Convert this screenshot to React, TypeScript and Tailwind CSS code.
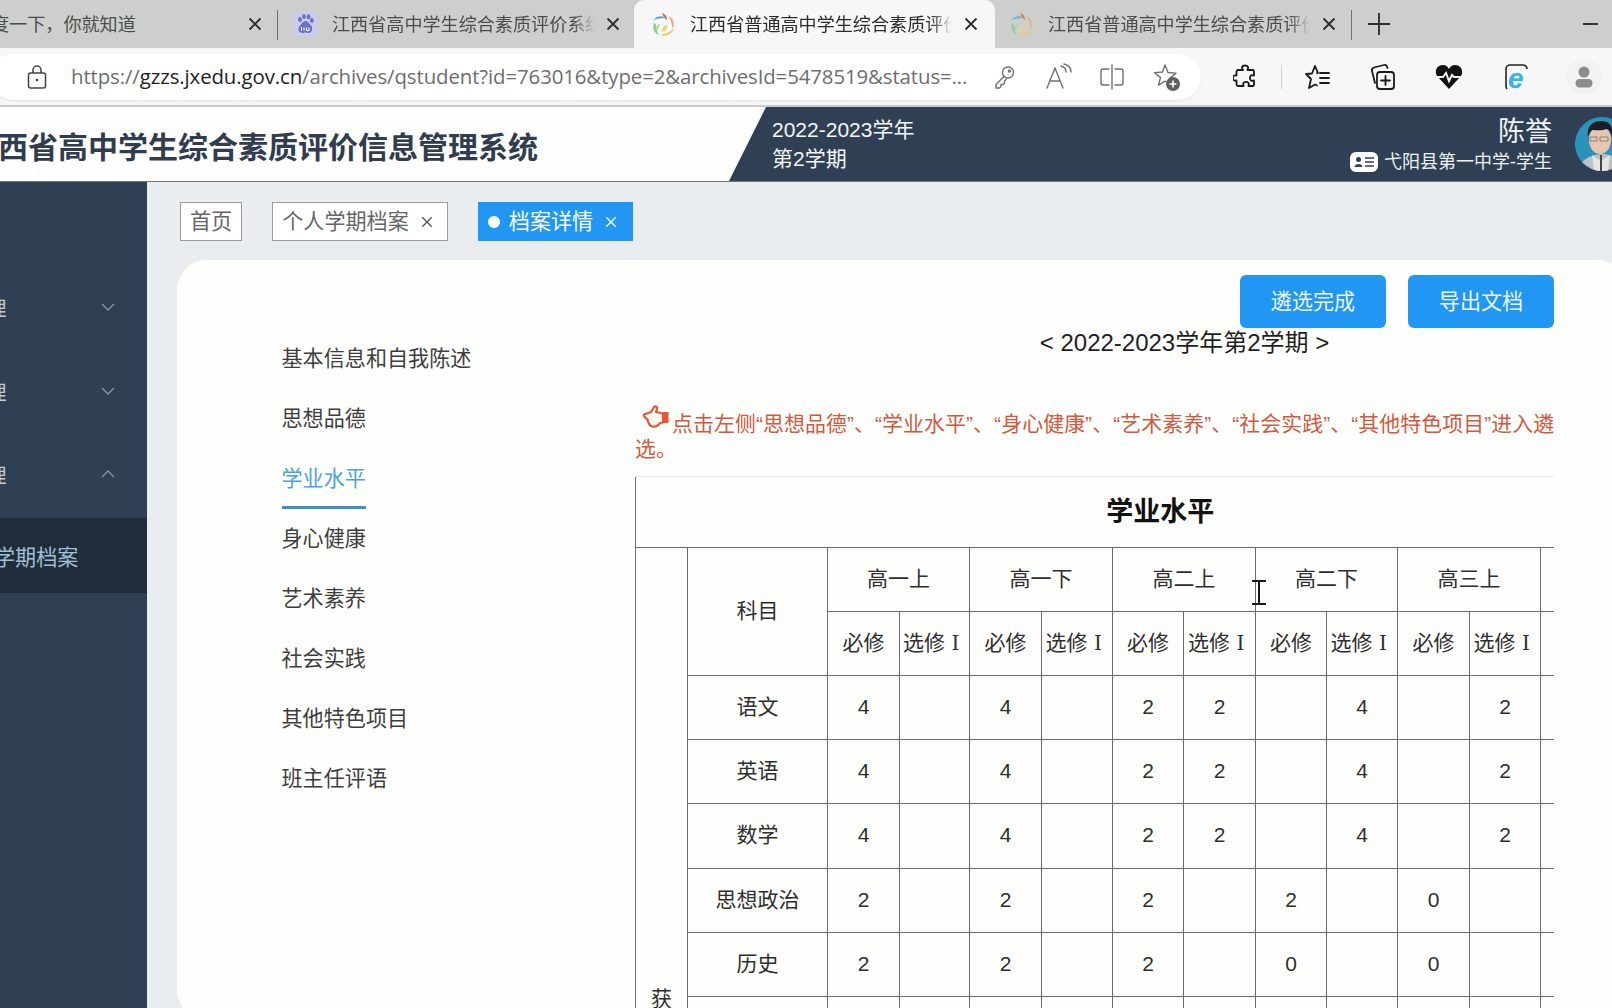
import React from "react";

const FONT = "font-['Liberation_Sans','Noto_Sans_CJK_SC',sans-serif]";

function Pinwheel({ faded = false }: { faded?: boolean }) {
  const o = faded ? 0.75 : 1;
  return (
    <svg width="27" height="27" viewBox="0 0 27 27" fill="none" opacity={o}>
      <path d="M12 2c3 1 5 3 5 7-2-1-4-4-5-7z" fill="#e2603c" />
      <path d="M19 5c4 2 6 7 4 12-1 0-1-1-1-2 0-4-2-6-3-10z" fill="#f0a58c" />
      <path d="M24 18c-2 5-8 8-13 6 0-1 1-1 2-1 4 0 7-3 11-5z" fill="#f1c85c" />
      <path d="M17 14c1 3-1 6-5 7-1-3 1-6 5-7z" fill="#f4d27a" />
      <path d="M9 24C4 22 2 17 4 12c3 1 2 4 3 7 0 2 1 3 2 5z" fill="#7fd09a" />
      <path d="M10 13c-1 2-2 5-3 6-1-3 0-5 3-6z" fill="#9ad67e" />
      <path d="M3 10c2-4 7-6 12-4-2 2-5 1-8 2-2 0-3 1-4 2z" fill="#36b4dc" />
    </svg>
  );
}

function BaiduIcon() {
  return (
    <svg width="24" height="24" viewBox="0 0 24 24">
      <rect width="24" height="24" rx="4" fill="#c9cbef" />
      <ellipse cx="7" cy="7.5" rx="2" ry="2.6" fill="#6d6fc9" />
      <ellipse cx="11" cy="4.6" rx="1.9" ry="2.5" fill="#6d6fc9" />
      <ellipse cx="15.5" cy="4.8" rx="1.9" ry="2.5" fill="#6d6fc9" />
      <ellipse cx="18.8" cy="8.5" rx="1.9" ry="2.4" fill="#6d6fc9" />
      <path d="M12.5 9c2.5 0 3.5 2.6 5.5 4.5 2.3 2.4 1.3 7.5-2.5 7.5-1.500 0-2-.5-3-.5s-1.500.5-3 .5c-4 0-5-4.500-2.800-7C8.500 12 10 9 12.500 9z" fill="#6d6fc9" />
      <path d="M8.500 15v4M11 15.500v3M13.500 15.500v2.500c0 1 2.500 1 2.500 0v-2.500" stroke="#fff" strokeWidth="1.100" fill="none" />
    </svg>
  );
}

function Close({ size = 14, color = "#2b2b2b", width = 1.8 }: { size?: number; color?: string; width?: number }) {
  return (
    <svg width={size} height={size} viewBox="0 0 14 14" fill="none" stroke={color} strokeWidth={width}>
      <path d="M1.500 1.500l11 11M12.500 1.500l-11 11" />
    </svg>
  );
}

function Tab({
  children,
  icon,
  active,
  w,
  divider,
}: {
  children: React.ReactNode;
  icon?: React.ReactNode;
  active?: boolean;
  w: string;
  divider?: boolean;
}) {
  return (
    <div
      className={`relative flex h-full shrink-0 items-center ${w} ${
        active ? "rounded-t-[10px] bg-[#f7f7f7] text-[#2b2b2b]" : "text-[#4a4d4c]"
      }`}
    >
      {icon}
      {children}
      {divider && <span className="absolute right-0 top-[10px] h-[30px] w-px bg-[#6e706e]" />}
    </div>
  );
}

function FadeText({ text, w }: { text: string; w: string }) {
  return (
    <span
      className={`block overflow-hidden whitespace-nowrap pt-[1px] text-[18.1px] leading-[26px] ${w} [mask-image:linear-gradient(to_right,black_92%,transparent)]`}
    >
      {text}
    </span>
  );
}

function TabBar() {
  return (
    <div className="flex h-[48px] items-center bg-[#cdcfcc]">
      <Tab w="w-[278px]" divider>
        <span className="-ml-[9px] w-[257px] whitespace-nowrap pt-[1px] text-[18.1px] leading-[26px]">度一下，你就知道</span>
        <Close />
      </Tab>
      <Tab
        w="w-[356px] pl-[15px]"
        icon={
          <span className="mr-[15px] block h-[24px] w-[24px]">
            <BaiduIcon />
          </span>
        }
      >
        <FadeText text="江西省高中学生综合素质评价系统" w="w-[263px]" />
        <span className="ml-[11px]">
          <Close />
        </span>
      </Tab>
      <Tab
        active
        w="w-[361px] pl-[16px]"
        icon={
          <span className="mr-[13px] block h-[27px] w-[27px]">
            <Pinwheel />
          </span>
        }
      >
        <FadeText text="江西省普通高中学生综合素质评价系统" w="w-[262px]" />
        <span className="ml-[12px]">
          <Close />
        </span>
      </Tab>
      <Tab
        w="w-[357px] pl-[13px]"
        divider
        icon={
          <span className="mr-[13px] block h-[27px] w-[27px]">
            <Pinwheel faded />
          </span>
        }
      >
        <FadeText text="江西省普通高中学生综合素质评价系统" w="w-[262px]" />
        <span className="ml-[12px]">
          <Close />
        </span>
      </Tab>
      <span className="ml-[16px]">
        <svg width="22" height="22" viewBox="0 0 22 22" stroke="#2b2b2b" strokeWidth="1.800">
          <path d="M11 0v22M0 11h22" />
        </svg>
      </span>
      <span className="ml-[193px] block h-[2px] w-[15px] bg-[#333]" />
    </div>
  );
}

const stroke = { fill: "none", stroke: "#707070", strokeWidth: 1.4, strokeLinecap: "round", strokeLinejoin: "round" } as const;
const dark = { fill: "none", stroke: "#1a1a1a", strokeWidth: 1.8, strokeLinecap: "round", strokeLinejoin: "round" } as const;

function Toolbar() {
  return (
    <div className="flex h-[57px] items-center border-b-0 bg-[#f7f7f7]">
      <div className="-ml-[10px] flex h-[46px] w-[1211px] shrink-0 items-center rounded-full bg-white shadow-[0_1px_2px_rgba(0,0,0,0.08)]">
        <span className="ml-[37px] block h-[24px] w-[20px]">
          <svg width="20" height="24" viewBox="0 0 20 24" fill="none" stroke="#444" strokeWidth="1.500">
            <rect x="1.500" y="8" width="17" height="15" rx="2" />
            <path d="M6 8V5a4 4 0 0 1 8 0v3" />
            <circle cx="10" cy="15" r="1.300" fill="#444" stroke="none" />
          </svg>
        </span>
        <span className="mb-[2px] ml-[24px] w-[897px] whitespace-nowrap text-[20.4px] leading-[28px] tracking-[-0.1px] text-[#6d6d6d] font-['Open_Sans','Liberation_Sans',sans-serif]">
          https://<span className="text-[#222]">gzzs.jxedu.gov.cn</span>/archives/qstudent?id=763016&amp;type=2&amp;archivesId=5478519&amp;status=...
        </span>
        <span className="ml-[23px] block h-[26px] w-[26px]">
          <svg width="26" height="26" viewBox="0 0 26 26" {...stroke}>
            <circle cx="17" cy="8.500" r="5.500" />
            <circle cx="18.500" cy="7" r="1" />
            <path d="M13 12.500L5 20.500v3.500h3.500l1.500-1.500v-2h2l1.500-1.500v-2l2-2" />
          </svg>
        </span>
        <span className="ml-[28px] block h-[28px] w-[28px]">
          <svg width="28" height="28" viewBox="0 0 28 28" {...stroke}>
            <path d="M2 25L10 5l8 20M5 18h10" />
            <path d="M16 3c3 1 5 3 5 6M19 1c4 1 7 4 7 8" />
          </svg>
        </span>
        <span className="ml-[26px] block h-[28px] w-[26px]">
          <svg width="26" height="28" viewBox="0 0 26 28" {...stroke}>
            <path d="M10 6H4a2 2 0 0 0-2 2v12a2 2 0 0 0 2 2h6M16 6h6a2 2 0 0 1 2 2v12a2 2 0 0 1-2 2h-6M13 2v24" />
          </svg>
        </span>
        <span className="ml-[28px] block h-[30px] w-[28px]">
          <svg width="28" height="30" viewBox="0 0 28 30">
            <path d="M12 3l3 7.500 8 .6-6 5 2 6.500-7-3.500-6.500 4 2-7.500-6-5 8-.6z" {...stroke} />
            <circle cx="20" cy="22" r="7" fill="#5f5f5f" />
            <path d="M20 18.500v7M16.500 22h7" stroke="#fff" strokeWidth="1.600" />
          </svg>
        </span>
      </div>
      <span className="ml-[32px] block h-[26px] w-[24px]">
        <svg width="24" height="26" viewBox="0 0 24 26" {...dark}>
          <path d="M9 3c1-2 5-2 6 0 .5 1-.5 2-.5 3h5c1 0 1.500 1 1.500 2v3.500c-1 0-2-.8-3 0-1.500 1.200-1.500 3.800 0 5 1 .8 2 0 3 0V20c0 1-.5 2-1.500 2h-4c0-1 .8-2 0-3-1.200-1.500-3.800-1.500-5 0-.8 1 0 2 0 3H5c-1 0-1.500-1-1.500-2v-3.500c-1 0-2 .8-3-.5-.8-1.500-.8-3 0-4 1-1.200 2-.5 3-.5V8c0-1 .5-2 1.500-2h5c0-1-1.500-2-1-3z" />
        </svg>
      </span>
      <span className="ml-[24px] block h-[24px] w-px bg-[#cfcfcf]" />
      <span className="ml-[23px] block h-[26px] w-[26px]">
        <svg width="26" height="26" viewBox="0 0 26 26" {...dark}>
          <path d="M10 2l3 7h-1M10 2L7 9.500l-6 .5 5 5-2 9 6-3.500 2 1" />
          <path d="M15 9h9M15 14h9M15 19h9" />
        </svg>
      </span>
      <span className="ml-[39px] block h-[28px] w-[26px]">
        <svg width="26" height="28" viewBox="0 0 26 28" {...dark}>
          <path d="M5 20L2 8c-.5-2 .5-3 2-3.500L14 2c2-.5 3 1 3.500 3" />
          <rect x="7" y="9" width="17" height="17" rx="3" />
          <path d="M15.500 13v9M11 17.500h9" />
        </svg>
      </span>
      <span className="ml-[39px] block h-[26px] w-[28px]">
        <svg width="28" height="26" viewBox="0 0 28 26">
          <path d="M14 25L2 12C-1 7 2 1 8 1c3 0 5 2 6 4 1-2 3-4 6-4 6 0 9 6 6 11z" fill="#111" />
          <path d="M0 13h8l3-4 3 8 3-6 2 2h9" fill="none" stroke="#f7f7f7" strokeWidth="2" />
        </svg>
      </span>
      <span className="ml-[42px] block h-[26px] w-[24px]">
        <svg width="24" height="26" viewBox="0 0 24 26">
          <path d="M2 25c-1-1-1-2-1-3V5a4 4 0 0 1 4-4h13a4 4 0 0 1 4 4" fill="none" stroke="#222" strokeWidth="1.600" />
          <text x="3" y="24" fontSize="28" fontWeight="700" fontStyle="italic" fill="#32b5e5" fontFamily="'Liberation Sans',sans-serif">e</text>
        </svg>
      </span>
      <span className="ml-[37px] flex h-[36px] w-[36px] items-center justify-center rounded-full bg-[#f2f2f2]">
        <svg width="18" height="24" viewBox="0 0 18 24" fill="#8c8c8c">
          <circle cx="9" cy="7" r="5.500" />
          <rect x="0.500" y="14" width="17" height="8.500" rx="4.200" />
        </svg>
      </span>
    </div>
  );
}

function Header() {
  return (
    <div className="flex h-[77px] justify-between border-t-[2px] border-b border-t-[#c9cccc] border-b-[#6f7680] bg-[#2f4054]">
      <div className="flex w-[766px] shrink-0 items-center bg-[#fefefe] pt-[8px] [clip-path:polygon(0_0,100%_0,729px_100%,0_100%)]">
        <h1 className="-ml-[2px] whitespace-nowrap text-[30px] font-bold leading-[40px] text-[#2f3d4e]">
          西省高中学生综合素质评价信息管理系统
        </h1>
      </div>
      <div className="ml-[6px] flex flex-col justify-center text-[21px] leading-[29px] text-[#f5f7f8]">
        <span className="whitespace-nowrap">2022-2023学年</span>
        <span>第2学期</span>
      </div>
      <div className="ml-auto flex items-center">
        <div className="flex flex-col items-end pt-[2px]">
          <span className="text-[27px] leading-[33px] text-[#eef2f4]">陈誉</span>
          <div className="flex items-center gap-[6px] text-[18px] leading-[26px] text-[#eef2f4]">
            <svg width="28" height="20" viewBox="0 0 28 20">
              <rect width="28" height="20" rx="6" fill="#fff" />
              <circle cx="8.500" cy="7.500" r="2.500" fill="#2f4054" />
              <path d="M4.500 15c0-4 8-4 8 0z" fill="#2f4054" />
              <path d="M15 6h9M15 10h9M15 14h9" stroke="#2f4054" strokeWidth="1.500" />
            </svg>
            <span className="whitespace-nowrap">弋阳县第一中学-学生</span>
          </div>
        </div>
        <span className="ml-[23px] -mr-[17px] block h-[54px] w-[54px] shrink-0">
          <svg width="54" height="54" viewBox="0 0 54 54">
            <defs>
              <clipPath id="av">
                <circle cx="27" cy="27" r="27" />
              </clipPath>
            </defs>
            <g clipPath="url(#av)">
              <rect width="54" height="54" fill="#2a93b9" />
              <path d="M4 54c1-12 12-16 22-17 12 0 22 5 24 17z" fill="#bfc1c2" />
              <path d="M17 38l9 6 9-6-2 16H19z" fill="#e4e6e6" />
              <rect x="25" y="38" width="2" height="16" fill="#444" />
              <ellipse cx="25" cy="23" rx="11" ry="14" fill="#e6c6b0" />
              <path d="M13 20C11 9 18 4 26 4c8 0 13 5 11 16-1-4-2-7-5-8-5 2-12 1-15 1-2 2-3 4-4 7z" fill="#1b1f24" />
              <path d="M15 20h7v4h-7zM25 20h8v4h-8z" fill="none" stroke="#555" strokeWidth="0.600" />
            </g>
          </svg>
        </span>
      </div>
    </div>
  );
}

function Sidebar() {
  const Chevron = ({ up }: { up?: boolean }) => (
    <svg className="mb-[5px]" width="14" height="8" viewBox="0 0 14 8" fill="none" stroke="#8a98a6" strokeWidth="1.300">
      <path d={up ? "M1 7l6-6 6 6" : "M1 1l6 6 6-6"} />
    </svg>
  );
  const Item = ({ up, h }: { up?: boolean; h: string }) => (
    <div className={`flex items-center justify-between pr-[32px] text-[20.6px] text-[#c3ccd4] ${h}`}>
      <span className="-ml-[14px]">理</span>
      <Chevron up={up} />
    </div>
  );
  return (
    <aside className="flex w-[147px] shrink-0 flex-col bg-[#2f4054] pt-[85px]">
      <Item h="h-[84px]" />
      <Item h="h-[84px]" />
      <Item h="h-[83px]" up />
      <div className="flex h-[75px] items-center overflow-hidden bg-[#1f2c3a] pt-[5px] text-[21.1px] text-[#9fc0d6]">
        <span className="-ml-[6px] whitespace-nowrap">学期档案</span>
      </div>
    </aside>
  );
}

function Tag({ children, active, close }: { children: React.ReactNode; active?: boolean; close?: boolean }) {
  return (
    <div
      className={`flex h-[39px] items-center whitespace-nowrap border pl-[9px] text-[21.1px] ${close ? (active ? "pr-[15px]" : "pr-[14px]") : "pr-[9px]"} ${
        active ? "border-[#2196f3] bg-[#2196f3] text-white" : "border-[#9a9a9a] bg-white text-[#666]"
      }`}
    >
      {active && <span className="mr-[9px] block h-[12px] w-[12px] rounded-full bg-white" />}
      {children}
      {close && (
        <span className="ml-[12px]">
          <Close size={12} color={active ? "#fff" : "#555"} width={1.6} />
        </span>
      )}
    </div>
  );
}

const NAV = ["基本信息和自我陈述", "思想品德", "学业水平", "身心健康", "艺术素养", "社会实践", "其他特色项目", "班主任评语"];

function Nav() {
  return (
    <nav className="w-[458px] shrink-0 pl-[104.5px] pt-[69px] text-[21.1px] text-[#3d3d3d]">
      {NAV.map((n) => (
        <div key={n} className="h-[60px]">
          {n === "学业水平" ? (
            <span className="inline-flex h-[60px] items-center border-b-[3px] border-[#3f8fcb] pt-[3px] text-[#4ba3d9]">{n}</span>
          ) : (
            <span className="flex h-[60px] items-center">{n}</span>
          )}
        </div>
      ))}
    </nav>
  );
}

const TERMS = ["高一上", "高一下", "高二上", "高二下", "高三上", ""];
const ROWS: [string, string[]][] = [
  ["语文", ["4", "", "4", "", "2", "2", "", "4", "", "2", "", ""]],
  ["英语", ["4", "", "4", "", "2", "2", "", "4", "", "2", "", ""]],
  ["数学", ["4", "", "4", "", "2", "2", "", "4", "", "2", "", ""]],
  ["思想政治", ["2", "", "2", "", "2", "", "2", "", "0", "", "", ""]],
  ["历史", ["2", "", "2", "", "2", "", "0", "", "0", "", "", ""]],
  ["", ["", "", "", "", "", "", "", "", "", "", "", ""]],
];
const WIDTHS = ["w-[52px]", "w-[140px]", "w-[72px]", "w-[70px]", "w-[72px]", "w-[71px]", "w-[71px]", "w-[72px]", "w-[71px]", "w-[71px]", "w-[72px]", "w-[71px]", "w-[71px]", "w-[71px]"];
const CELL = "border border-[#6b6b6b] text-center align-middle p-0 pb-[2px]";

function ScoreTable() {
  return (
    <div className="w-[919px] overflow-hidden">
      <table className="w-[1047px] table-fixed border-collapse text-[21px] text-[#2e2e2e]">
        <colgroup>
          {WIDTHS.map((w, i) => (
            <col key={i} className={w} />
          ))}
        </colgroup>
        <tbody>
          <tr className="h-[71px]">
            <td colSpan={14} className="border-t border-b border-l border-t-[#e6e6e6] border-b-[#6b6b6b] border-l-[#6b6b6b] p-0 pl-[2px] text-center text-[27px] font-bold text-[#111]">
              学业水平
            </td>
          </tr>
          <tr className="h-[64px]">
            <td rowSpan={8} className={`${CELL} !align-top pt-[435px]`}>
              获
            </td>
            <td rowSpan={2} className={CELL}>
              科目
            </td>
            {TERMS.map((t, i) => (
              <td key={i} colSpan={2} className={CELL}>
                {t}
              </td>
            ))}
          </tr>
          <tr className="h-[64px]">
            {TERMS.flatMap((t, i) =>
              t
                ? [
                    <td key={`a${i}`} className={CELL}>
                      必修
                    </td>,
                    <td key={`b${i}`} className={`${CELL} whitespace-nowrap`}>
                      选修<span className="inline-block w-[21px] text-center font-['DejaVu_Serif',serif] text-[20px]">Ⅰ</span>
                    </td>,
                  ]
                : [<td key={`a${i}`} className={CELL} />, <td key={`b${i}`} className={CELL} />]
            )}
          </tr>
          {ROWS.map(([name, vals], r) => (
            <tr key={r} className={r === 2 ? "h-[65px]" : "h-[64px]"}>
              <td className={CELL}>{name}</td>
              {vals.map((v, i) => (
                <td key={i} className={CELL}>
                  {v}
                </td>
              ))}
            </tr>
          ))}
        </tbody>
      </table>
    </div>
  );
}

function HandIcon() {
  return (
    <svg width="28" height="24" viewBox="0 0 28 24" className="mr-[2px] ml-[7px] inline-block align-[2px]">
      <path
        d="M2 9.500c2-1 5-1.500 7-2.500l3-5c1.500-1.500 3.500 0 3 2l-1 3 7 1.500v9l-3 .5c-2 3.500-6 4.500-9 3-2-1-3-4-3.500-6.500C3.500 13 1 11 2 9.500z"
        fill="#fff5f0"
        stroke="#e2553a"
        strokeWidth="2.200"
        strokeLinejoin="round"
      />
      <rect x="21" y="7" width="5.500" height="11" fill="#e2553a" />
    </svg>
  );
}

function Content() {
  return (
    <div className="w-[919px] shrink-0 pt-[15px]">
      <div className="flex justify-end gap-[22px]">
        <button className="h-[53px] w-[146px] rounded-[6px] bg-[#2196f3] pt-[1px] text-[21.1px] text-[#eef7fe]">遴选完成</button>
        <button className="h-[53px] w-[146px] rounded-[6px] bg-[#2196f3] pt-[1px] text-[21.1px] text-[#eef7fe]">导出文档</button>
      </div>
      <div className="pl-[180px] text-center text-[24px] leading-[30px] text-[#1e1e1e]">&lt; 2022-2023学年第2学期 &gt;</div>
      <p className="-mr-[4px] mt-[47px] text-[20.9px] leading-[25px] tracking-[0.1px] text-[#d0593e]">
        <HandIcon />
        点击左侧“思想品德”、“学业水平”、“身心健康”、“艺术素养”、“社会实践”、“其他特色项目”进入遴选。
      </p>
      <div className="mt-[15px]">
        <ScoreTable />
      </div>
    </div>
  );
}

export default function App() {
  return (
    <div className={`relative h-[1008px] w-[1612px] overflow-hidden bg-[#e9edf0] ${FONT}`}>
      <TabBar />
      <Toolbar />
      <Header />
      <div className="flex">
        <Sidebar />
        <main className="min-w-0 flex-1 pl-[33px]">
          <div className="flex gap-[30px] pt-[20px]">
            <Tag>首页</Tag>
            <Tag close>个人学期档案</Tag>
            <Tag active close>
              档案详情
            </Tag>
          </div>
          <div className="-ml-[3px] mt-[19px] flex h-[760px] w-[1450px] rounded-[30px] bg-[#fefefd]">
            <Nav />
            <Content />
          </div>
        </main>
      </div>
      <svg className="absolute left-[1252px] top-[580px]" width="14" height="25" viewBox="0 0 14 25" fill="none" stroke="#1a1a1a" strokeWidth="2">
        <path d="M0 1h14M0 24h14M7 1v23" />
      </svg>
    </div>
  );
}
